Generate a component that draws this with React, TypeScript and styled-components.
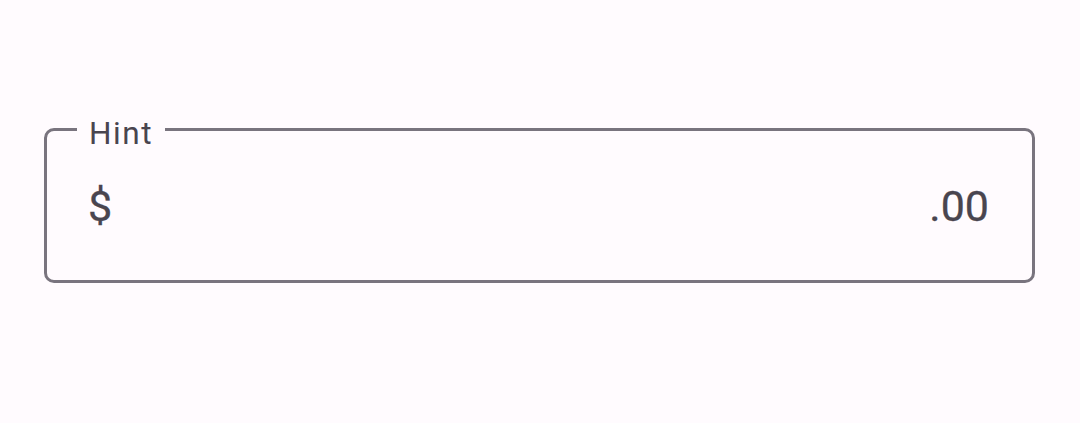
import React, { useState } from "react";
import styled, { createGlobalStyle } from "styled-components";

const GlobalStyle = createGlobalStyle`
  html, body {
    margin: 0;
    padding: 0;
    background: #fffbfe;
    font-family: Roboto, "Noto Sans", sans-serif;
  }
`;

const Page = styled.div`
  width: 1080px;
  height: 423px;
  box-sizing: border-box;
  padding: 107px 45px 0 44px;
  background: #fffbfe;
`;

const Outline = styled.fieldset`
  margin: 0;
  padding: 0;
  border: 3px solid #79747e;
  border-radius: 10px;
  min-width: 0;
`;

const Label = styled.legend`
  margin-left: 30px;
  padding: 8px 12px 0;
  font-size: 31.5px;
  line-height: normal;
  color: #49454f;
  letter-spacing: 1.6px;
`;

const Row = styled.div`
  height: 128px;
  box-sizing: border-box;
  padding: 29px 43px 0 41px;
  display: flex;
  align-items: flex-start;
  font-size: 43px;
  line-height: normal;
  color: #49454f;
  -webkit-text-stroke: 0.3px #49454f;
`;

const Affix = styled.span`
  flex: none;
`;

const Field = styled.input`
  flex: 1;
  min-width: 0;
  border: none;
  outline: none;
  background: transparent;
  padding: 0;
  margin: 0;
  font: inherit;
  color: #1c1b1f;
`;

export default function App() {
  const [value, setValue] = useState("");
  return (
    <>
      <GlobalStyle />
      <Page>
        <Outline>
          <Label>Hint</Label>
          <Row>
            <Affix>$</Affix>
            <Field value={value} onChange={(e) => setValue(e.target.value)} />
            <Affix>.00</Affix>
          </Row>
        </Outline>
      </Page>
    </>
  );
}
